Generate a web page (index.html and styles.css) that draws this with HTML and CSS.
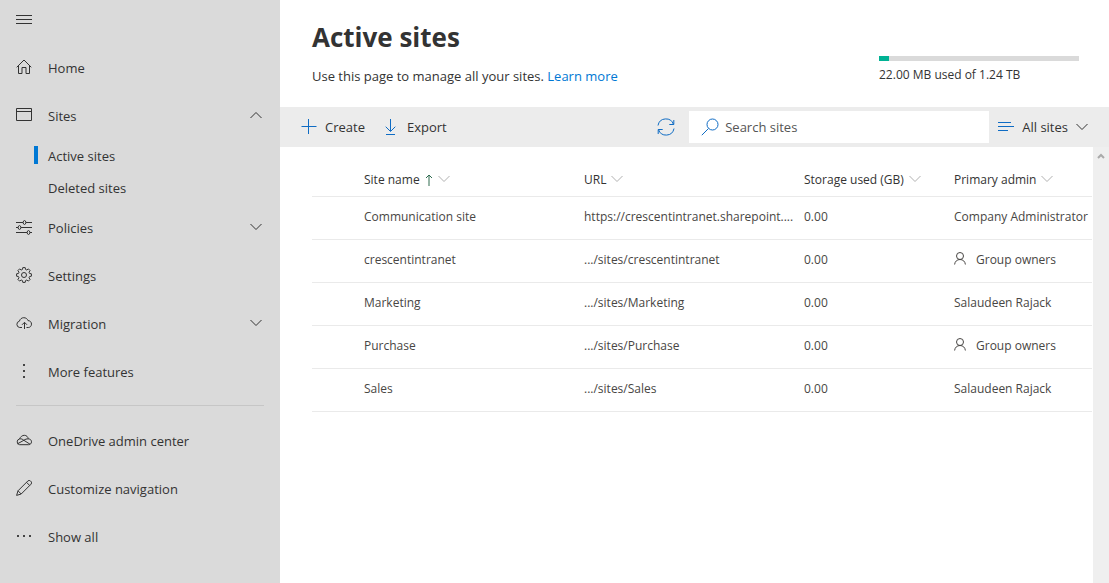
FILE: index.html
```html
<!DOCTYPE html>
<html lang="en">
<head>
<meta charset="utf-8">
<meta name="viewport" content="width=device-width, initial-scale=1">
<title>Active sites</title>
<link rel="stylesheet" href="styles.css">
</head>
<body>
<svg class="defs" aria-hidden="true">
  <symbol id="chevron" viewBox="0 0 12 8"><path d="M0.5 1 6 6.5 11.5 1"/></symbol>
  <symbol id="person" viewBox="0 0 12 13"><circle cx="6" cy="4" r="3.5"/><path d="M.6 12.5C.9 9.500 3 7.500 6 7.500s5.100 2 5.400 5"/></symbol>
</svg>
<div class="app">
  <aside class="sidebar">
    <button class="menu-button" type="button" aria-label="Toggle navigation">
      <svg class="icon" viewBox="0 0 16 16"><path d="M0 3.500h16M0 7.500h16M0 11.500h16"/></svg>
    </button>
    <nav aria-label="Main">
      <a class="nav-item" href="#">
        <svg class="icon" viewBox="0 0 16 16"><path d="M.7 8.300 8 1l7.300 7.300M2.500 6.800v7.700h3.500V8.500h4v6h3.500V6.800"/></svg>
        <span>Home</span>
      </a>
      <button class="nav-item" type="button" aria-expanded="true">
        <svg class="icon" viewBox="0 0 16 16"><path d="M.5 1.500h15v12H.5zM.5 4.500h15"/></svg>
        <span>Sites</span>
        <svg class="chevron chevron-up"><use href="#chevron"/></svg>
      </button>
      <a class="nav-sub selected" href="#" aria-current="page">Active sites</a>
      <a class="nav-sub" href="#">Deleted sites</a>
      <button class="nav-item" type="button" aria-expanded="false">
        <svg class="icon" viewBox="0 0 16 16"><path d="M0 3.500h7M10 3.500h6M0 8.500h2M5 8.500h11M0 13.500h11M14 13.500h2"/><ellipse cx="8.500" cy="3.500" rx="1.300" ry="2"/><ellipse cx="3.500" cy="8.500" rx="1.300" ry="2"/><ellipse cx="12.500" cy="13.500" rx="1.300" ry="2"/></svg>
        <span>Policies</span>
        <svg class="chevron"><use href="#chevron"/></svg>
      </button>
      <a class="nav-item" href="#">
        <svg class="icon" viewBox="0 0 16 16"><circle cx="8" cy="8" r="2.500"/><path d="M6.800.6h2.400l.4 1.900 1.200.5 1.600-1.100 1.700 1.700L13 5.200l.5 1.200 1.900.4v2.400l-1.900.4-.5 1.200 1.100 1.600-1.700 1.700-1.600-1.100-1.200.5-.4 1.900H6.800l-.4-1.900-1.200-.5-1.600 1.100-1.700-1.700L3 10.800l-.5-1.200-1.900-.4V6.800l1.900-.4.5-1.200-1.100-1.600 1.700-1.700L5.200 3l1.200-.5z"/></svg>
        <span>Settings</span>
      </a>
      <button class="nav-item" type="button" aria-expanded="false">
        <svg class="icon" viewBox="0 0 16 16"><path d="M6 12.500H3.700A3.200 3.200 0 0 1 3.400 6.200C4 4 5.700 2.700 7.800 2.700c2 0 3.600 1.100 4.200 2.900 2 0 3.500 1.500 3.500 3.500S14 12.500 12.300 12.500H10.500M8.500 14V7.500M6 9.800l2.500-2.500L11 9.800"/></svg>
        <span>Migration</span>
        <svg class="chevron"><use href="#chevron"/></svg>
      </button>
      <a class="nav-item" href="#">
        <svg class="icon solid" viewBox="0 0 16 16"><path d="M7 1h2v2H7zM7 7h2v2H7zM7 13h2v2H7z"/></svg>
        <span>More features</span>
      </a>
      <hr class="divider">
      <a class="nav-item" href="#">
        <svg class="icon" viewBox="0 0 16 16"><path d="M3.600 12.700A2.900 2.900 0 0 1 3.500 7C4.500 4.700 6.300 3.300 8.300 3.300c2.200 0 3.600 1.500 4 3.600 2 0 3.200 1.300 3.200 2.900s-1.200 2.900-2.900 2.900zM3.500 7c1.800-.5 3 .2 4.200 1.200l6.300 4M1.500 11.800 8 8.200c1.400-1 2.600-1.400 4.300-1.300"/></svg>
        <span>OneDrive admin center</span>
      </a>
      <a class="nav-item" href="#">
        <svg class="icon" viewBox="0 0 16 16"><path d="M.6 15.400 2 10.800 11.800 1a1.900 1.900 0 0 1 2.700 0l.5.500a1.900 1.900 0 0 1 0 2.700L5.200 14zM2 10.800 5.200 14M10.500 2.300l3.200 3.200"/></svg>
        <span>Customize navigation</span>
      </a>
      <a class="nav-item" href="#">
        <svg class="icon solid" viewBox="0 0 16 16"><path d="M1 7h2v2H1zM7 7h2v2H7zM13 7h2v2h-2z"/></svg>
        <span>Show all</span>
      </a>
    </nav>
  </aside>

  <main class="main">
    <header class="page-header">
      <div>
        <h1 class="title">Active sites</h1>
        <p class="intro">Use this page to manage all your sites. <a class="link" href="#">Learn more</a></p>
      </div>
      <div class="storage">
        <div class="meter"><div class="meter-fill"></div></div>
        <p class="storage-text">22.00 MB used of 1.24 TB</p>
      </div>
    </header>

    <div class="commands">
      <button class="command" type="button">
        <svg class="icon blue" viewBox="0 0 16 16"><path d="M.5 7.500h15M7.500 0v15"/></svg>
        <span>Create</span>
      </button>
      <button class="command" type="button">
        <svg class="icon blue" viewBox="0 0 16 16"><path d="M7.500 0v12M2.700 7.700l4.800 4.800 4.800-4.800M3 15.500h9"/></svg>
        <span>Export</span>
      </button>
      <button class="command refresh" type="button" aria-label="Refresh">
        <svg class="icon-large blue" viewBox="0 0 18 18"><path d="M1 7.500A8 8 0 0 1 16.500 6.500M16.800 2v4.500h-4.500M17 10.500A8 8 0 0 1 1.500 11.500M1.200 16v-4.500h4.500"/></svg>
      </button>
      <label class="search">
        <svg class="icon-large blue" viewBox="0 0 18 18"><circle cx="11.500" cy="6.500" r="5.500"/><path d="M7.500 10.500.8 17.200"/></svg>
        <input class="search-input" type="text" placeholder="Search sites" aria-label="Search sites">
      </label>
      <button class="command view" type="button">
        <svg class="icon solid-blue" viewBox="0 0 16 16"><path d="M0 3h13v1H0zM0 7h16v1H0zM0 11h10v1H0z"/></svg>
        <span>All sites</span>
        <svg class="chevron"><use href="#chevron"/></svg>
      </button>
    </div>

    <div class="content">
      <div class="table-area">
        <table class="sites">
          <colgroup><col class="c-check"><col class="c-wide"><col class="c-wide"><col class="c-storage"><col></colgroup>
          <thead>
            <tr>
              <td></td>
              <th scope="col"><button class="sort" type="button">Site name <svg class="arrow" viewBox="0 0 8 12"><path d="M4 12V1M1 4l3-3 3 3"/></svg><svg class="chevron"><use href="#chevron"/></svg></button></th>
              <th scope="col"><button class="sort" type="button">URL<svg class="chevron"><use href="#chevron"/></svg></button></th>
              <th scope="col"><button class="sort" type="button">Storage used (GB)<svg class="chevron"><use href="#chevron"/></svg></button></th>
              <th scope="col"><button class="sort" type="button">Primary admin<svg class="chevron"><use href="#chevron"/></svg></button></th>
            </tr>
          </thead>
          <tbody>
            <tr><td></td><td>Communication site</td><td>https://crescentintranet.sharepoint....</td><td>0.00</td><td>Company Administrator</td></tr>
            <tr><td></td><td>crescentintranet</td><td>.../sites/crescentintranet</td><td>0.00</td><td><span class="owner"><svg class="person"><use href="#person"/></svg>Group owners</span></td></tr>
            <tr><td></td><td>Marketing</td><td>.../sites/Marketing</td><td>0.00</td><td>Salaudeen Rajack</td></tr>
            <tr><td></td><td>Purchase</td><td>.../sites/Purchase</td><td>0.00</td><td><span class="owner"><svg class="person"><use href="#person"/></svg>Group owners</span></td></tr>
            <tr><td></td><td>Sales</td><td>.../sites/Sales</td><td>0.00</td><td>Salaudeen Rajack</td></tr>
          </tbody>
        </table>
      </div>
      <div class="scrollbar" aria-hidden="true"><svg class="scroll-arrow" viewBox="0 0 8 6"><path d="M1 5l3-3 3 3"/></svg></div>
    </div>
  </main>
</div>
</body>
</html>
```
FILE: styles.css
```css
* { box-sizing: border-box; }
body {
  margin: 0;
  background: #fff;
  color: #333;
  font: 13px/20px "Open Sans", "Noto Sans", sans-serif;
}
h1, p { margin: 0; }
button {
  font: inherit;
  color: inherit;
  background: none;
  border: 0;
  padding: 0;
  text-align: left;
}
a { color: inherit; text-decoration: none; }
svg { fill: none; stroke: currentColor; flex: none; }
.defs { display: none; }
.icon { width: 16px; height: 16px; }
.icon-large { width: 18px; height: 18px; }
.solid { fill: #444; stroke: none; }
.blue { color: #0f6cc4; }
.solid-blue { fill: #0f6cc4; stroke: none; }
.chevron { width: 12px; height: 8px; }
.chevron-up { transform: rotate(180deg); }

.app {
  display: grid;
  grid-template-columns: 280px 1fr;
  min-height: 100vh;
}

.sidebar { background: #dadada; }
.menu-button {
  display: flex;
  align-items: center;
  height: 44px;
  padding: 0 16px 4px;
}
.nav-item {
  display: flex;
  align-items: center;
  gap: 16px;
  width: 100%;
  height: 48px;
  padding: 0 18px 0 16px;
}
.nav-item .icon, .nav-item .chevron { margin-bottom: 2px; }
.nav-item .chevron { margin-left: auto; }
.nav-sub {
  display: flex;
  align-items: center;
  height: 32px;
  padding-left: 48px;
}
.nav-sub::before {
  content: "";
  width: 4px;
  height: 18px;
  margin: 0 10px 2px -14px;
}
.selected::before { background: #0078d4; }
.divider {
  height: 1px;
  margin: 9px 16px 11px;
  border: 0;
  background: #c6c6c6;
}

.main {
  display: flex;
  flex-direction: column;
  min-width: 0;
}
.page-header {
  display: flex;
  justify-content: space-between;
  height: 107px;
  padding: 18px 30px 0 32px;
}
.title {
  font-size: 26px;
  line-height: 38px;
  font-weight: 700;
}
.intro { margin-top: 10px; }
.link { color: #0078d4; }
.storage { width: 200px; padding-top: 38px; font-size: 12px; }
.meter { height: 5px; background: #dadada; }
.meter-fill { width: 5%; height: 100%; background: #00b294; }
.storage-text { margin-top: 5px; line-height: 18px; }

.commands {
  display: flex;
  align-items: center;
  height: 40px;
  padding: 0 21px;
  background: #ececec;
}
.command {
  display: flex;
  align-items: center;
  gap: 8px;
  margin-right: 18px;
}
.refresh { margin: 0 14px 0 auto; }
.search {
  display: flex;
  align-items: center;
  gap: 6px;
  width: 300px;
  height: 32px;
  padding: 0 12px;
  background: #fff;
}
.search-input {
  flex: 1;
  min-width: 0;
  border: 0;
  padding: 0;
  font: inherit;
  color: #333;
  outline: 0;
}
.search-input::placeholder { color: #555; opacity: 1; }
.view { margin: 0 0 0 9px; }

.content { display: flex; flex: 1; }
.table-area { flex: 1; min-width: 0; padding: 17px 1px 0 32px; }
.scrollbar {
  display: flex;
  justify-content: center;
  width: 16px;
  padding-top: 6px;
  background: #efefef;
  color: #aaa;
}
.scroll-arrow { width: 8px; height: 6px; stroke-width: 2; }

.sites {
  width: 100%;
  table-layout: fixed;
  border-collapse: collapse;
  font-size: 12px;
  line-height: 18px;
}
.c-check { width: 52px; }
.c-wide { width: 220px; }
.c-storage { width: 150px; }
.sites th, .sites td {
  padding: 0;
  border-bottom: 1px solid #eaeaea;
  text-align: left;
  font-weight: 400;
  white-space: nowrap;
}
.sites thead { height: 32px; }
.sites tbody { color: #484644; }
.sites tbody td { height: 43px; padding-bottom: 2px; }
.sort { display: flex; align-items: center; gap: 5px; }
.sort .chevron { color: #b0b0b0; margin-bottom: 1px; }
.arrow { width: 8px; height: 12px; color: #2e6b4f; }
.owner { display: flex; align-items: center; gap: 10px; }
.person { width: 12px; height: 13px; margin-bottom: 3px; }
```
